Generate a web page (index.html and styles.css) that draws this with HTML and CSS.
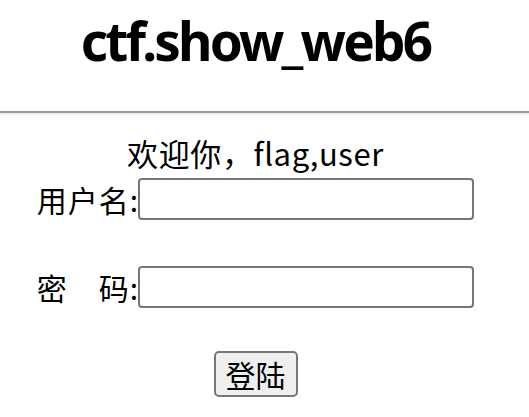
FILE: index.html
```html
<!DOCTYPE html>
<html>
<head>
<meta charset="utf-8">
<link rel="stylesheet" href="styles.css">
</head>
<body>
<div class="page">
  <h1 class="title">ctf.show_web6</h1>
</div>
<hr class="rule">
<div class="page">
  <form class="login">
    <div class="welcome">欢迎你，flag,user</div>
    <div class="row">
      <label class="label">用户名:</label><input class="field" type="text">
    </div>
    <div class="row row-pass">
      <label class="label">密<span class="gap"></span>码:</label><input class="field" type="password">
    </div>
    <div class="actions">
      <button class="btn" type="button">登陆</button>
    </div>
  </form>
</div>
</body>
</html>
```
FILE: styles.css
```css
html, body {
  margin: 0;
  padding: 0;
  background: #fff;
}
body {
  font-family: "Noto Sans", "Noto Sans CJK SC", sans-serif;
  font-size: 30px;
  color: #000;
}
.page {
  width: 511px;
}
.title {
  margin: 0;
  height: 111px;
  line-height: 82px;
  font-family: "Noto Sans", sans-serif;
  font-size: 53px;
  letter-spacing: -2.8px;
  font-weight: bold;
  text-align: center;
}
.rule {
  margin: 0;
  border: 0;
  height: 2px;
  background: #9a9a9a;
  border-bottom: 2px solid #eeeeee;
}
.login {
  display: flex;
  flex-direction: column;
  align-items: center;
  padding-top: 17px;
}
.welcome {
  line-height: 42px;
  height: 46px;
  font-family: "Noto Sans CJK SC", sans-serif;
  font-size: 31px;
  letter-spacing: 0.6px;
}
.row {
  display: flex;
  align-items: center;
  height: 42px;
}
.row-pass {
  margin-top: 46px;
}
.label {
  font-family: "Noto Sans CJK SC", sans-serif;
  line-height: 42px;
  letter-spacing: 1px;
}
.gap {
  display: inline-block;
  width: 31px;
}
.field {
  box-sizing: border-box;
  width: 336px;
  height: 42px;
  margin: 0 0 0 -1px;
  border: 2px solid #767676;
  border-radius: 4px;
  background: #fff;
  font-size: 28px;
  padding: 2px 4px;
}
.actions {
  margin-top: 43px;
}
.btn {
  box-sizing: border-box;
  width: 84px;
  height: 46px;
  margin: 0;
  padding: 0;
  border: 2px solid #767676;
  border-radius: 5px;
  background: #efefef;
  font-family: "Noto Sans CJK SC", sans-serif;
  font-size: 30px;
  line-height: 40px;
  color: #000;
}
```
